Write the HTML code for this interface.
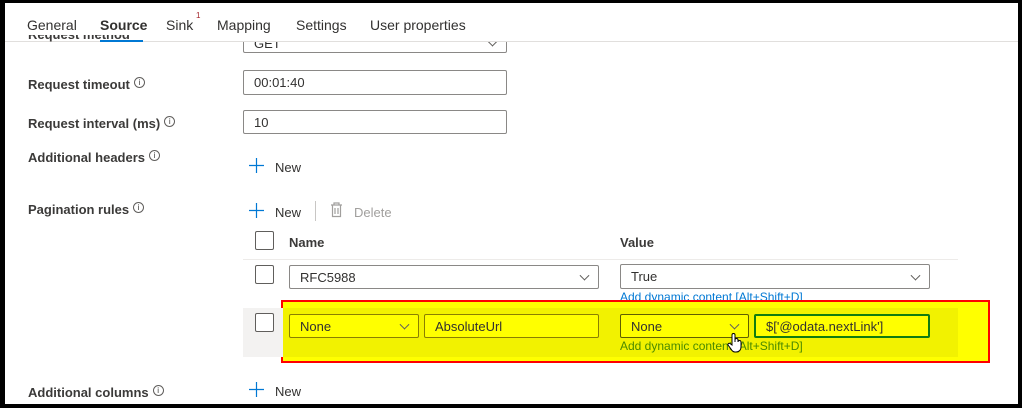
<!DOCTYPE html>
<html><head><style>
*{box-sizing:border-box;margin:0;padding:0}
body{width:1022px;height:408px;background:#000;position:relative;overflow:hidden;font-family:"Liberation Sans",sans-serif;color:#323130}
#p{position:absolute;left:5px;top:3px;width:1013px;height:401px;background:#fff;overflow:hidden}
.a{position:absolute;white-space:nowrap}
.lbl{font-size:13px;font-weight:bold;color:#3b3a39}
.inp{position:absolute;border:1px solid #8a8886;border-radius:2px;background:#fff;font-size:13px;padding-left:10px;display:flex;align-items:center}
.chev{position:absolute;right:10px;top:50%;width:7px;height:7px;border-right:1px solid #605e5c;border-bottom:1px solid #605e5c;transform:translateY(-70%) rotate(45deg)}
.cb{position:absolute;width:19px;height:19px;border:1px solid #605e5c;border-radius:2px;background:#fff}
.info{display:inline-block;width:11px;height:11px;border:1px solid #605e5c;border-radius:50%;font-size:8px;line-height:9px;text-align:center;font-weight:normal;vertical-align:4px;margin-left:4px}
.plus{position:absolute}
.new{font-size:13px}
.y{background:#ffff00!important}
</style></head><body><div id="p">
<div class="inp" style="left:238px;top:30px;width:264px;height:20px">GET<div class="chev"></div></div>
<div class="a" style="left:0;top:0;width:1013px;height:38px;background:#fff"></div>
<div class="a" style="left:0;top:38px;width:1013px;height:1px;background:#e1dfdd"></div>
<div class="a lbl" style="left:23px;top:32px;height:7px;overflow:hidden;line-height:0">Request method</div>
<div class="a" style="left:22px;top:14px;font-size:14px">General</div>
<div class="a" style="left:95px;top:14px;font-size:14px;font-weight:bold">Source</div>
<div class="a" style="left:95px;top:37px;width:43px;height:2px;background:#0078d4"></div>
<div class="a" style="left:161px;top:14px;font-size:14px">Sink</div>
<div class="a" style="left:191px;top:8px;font-size:8px;color:#a4262c">1</div>
<div class="a" style="left:212px;top:14px;font-size:14px">Mapping</div>
<div class="a" style="left:291px;top:14px;font-size:14px">Settings</div>
<div class="a" style="left:365px;top:14px;font-size:14px">User properties</div>

<div class="a lbl" style="left:23px;top:74px">Request timeout<span class="info">i</span></div>
<div class="inp" style="left:238px;top:67px;width:264px;height:25px">00:01:40</div>
<div class="a lbl" style="left:23px;top:113px">Request interval (ms)<span class="info">i</span></div>
<div class="inp" style="left:238px;top:107px;width:264px;height:24px">10</div>
<div class="a lbl" style="left:23px;top:147px">Additional headers<span class="info">i</span></div>
<svg class="plus" style="left:244px;top:155px" width="15" height="15"><path d="M7.5 0v15M0 7.5h15" stroke="#0078d4" stroke-width="1.2"/></svg><div class="a new" style="left:270px;top:157px">New</div>
<div class="a lbl" style="left:23px;top:199px">Pagination rules<span class="info">i</span></div>
<svg class="plus" style="left:244px;top:200px" width="15" height="15"><path d="M7.5 0v15M0 7.5h15" stroke="#0078d4" stroke-width="1.2"/></svg><div class="a new" style="left:270px;top:202px">New</div>
<div class="a" style="left:310px;top:198px;width:1px;height:20px;background:#c8c6c4"></div>
<svg class="a" style="left:325px;top:199px" width="13" height="16"><path d="M1 3h11M4 3V1h5v2M2.5 3.5v11h8v-11M5 6v6M8 6v6" fill="none" stroke="#a19f9d" stroke-width="1.2"/></svg>
<div class="a new" style="left:349px;top:202px;color:#a19f9d">Delete</div>

<div class="cb" style="left:250px;top:228px"></div>
<div class="a lbl" style="left:284px;top:232px">Name</div>
<div class="a lbl" style="left:615px;top:232px">Value</div>
<div class="a" style="left:238px;top:256px;width:715px;height:1px;background:#edebe9"></div>
<div class="cb" style="left:250px;top:262px"></div>
<div class="inp" style="left:284px;top:262px;width:310px;height:24px">RFC5988<div class="chev"></div></div>
<div class="inp" style="left:615px;top:261px;width:310px;height:25px">True<div class="chev"></div></div>
<div class="a" style="left:615px;top:287px;font-size:12px;color:#0078d4">Add dynamic content [Alt+Shift+D]</div>

<div class="a" style="left:276px;top:297px;width:709px;height:63px;border:2px solid #f00;background:#ffff00"></div>
<div class="a" style="left:278px;top:305px;width:675px;height:49px;background:#f2f200"></div>
<div class="a" style="left:238px;top:305px;width:40px;height:49px;background:#f3f2f1"></div>
<div class="cb" style="left:250px;top:310px"></div>
<div class="inp y" style="left:284px;top:311px;width:130px;height:24px;border-color:#8a7f00">None<div class="chev"></div></div>
<div class="inp y" style="left:419px;top:311px;width:175px;height:24px;border-color:#8a7f00">AbsoluteUrl</div>
<div class="inp y" style="left:615px;top:311px;width:129px;height:24px;border-color:#605e00">None<div class="chev"></div></div>
<div class="inp y" style="left:749px;top:311px;width:176px;height:24px;border:2px solid #107c10">$['@odata.nextLink']</div>
<div class="a" style="left:615px;top:336px;font-size:12px;color:#4a8a00">Add dynamic content [Alt+Shift+D]</div>
<svg class="a" style="left:722px;top:329px" width="16" height="22"><path d="M5 13V3a1.5 1.5 0 0 1 3 0v7V8a1.5 1.5 0 0 1 3 0v2a1.5 1.5 0 0 1 3 0v5c0 3-2 5-5 5H8c-2 0-3-1-4-3l-3-4a1.3 1.3 0 0 1 2-1.5z" fill="#fff" stroke="#000" stroke-width="1"/></svg>

<div class="a lbl" style="left:23px;top:382px">Additional columns<span class="info">i</span></div>
<svg class="plus" style="left:244px;top:379px" width="15" height="15"><path d="M7.5 0v15M0 7.5h15" stroke="#0078d4" stroke-width="1.2"/></svg><div class="a new" style="left:270px;top:381px">New</div>
</div></body></html>
